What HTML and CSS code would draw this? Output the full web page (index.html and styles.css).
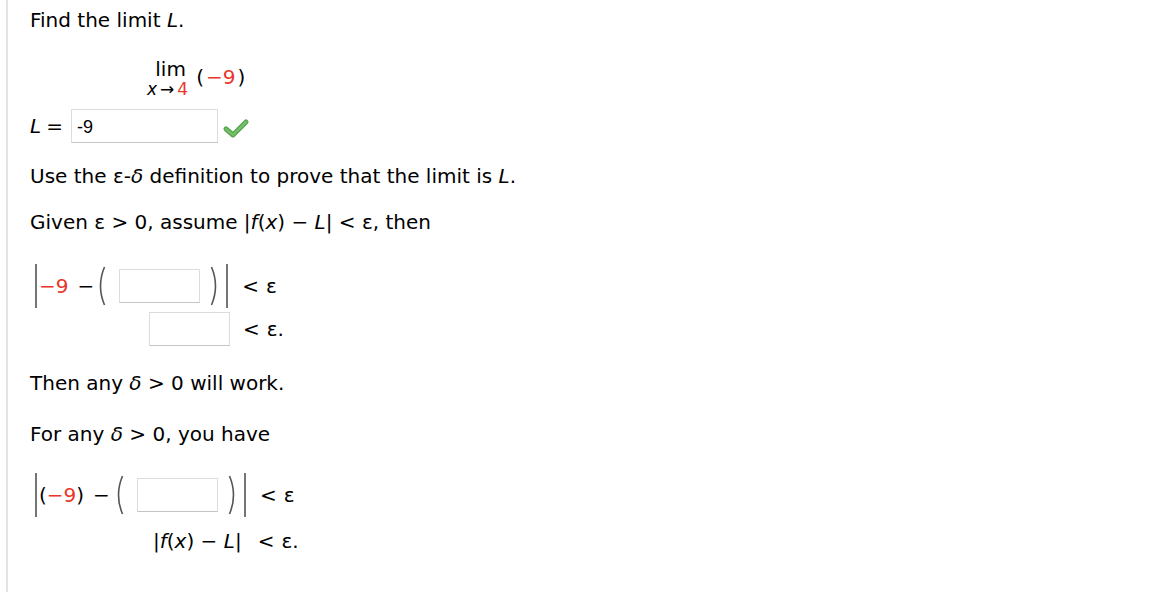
FILE: index.html
```html
<!DOCTYPE html>
<html>
<head>
<meta charset="utf-8">
<link rel="stylesheet" href="styles.css">
</head>
<body>
<div class="frame">
  <div class="q">
    <p class="l1">Find the limit <i>L</i>.</p>
    <div class="limrow">
      <span class="lim"><span class="limw">lim</span><span class="limsub"><i>x</i><span class="arr">→</span><span class="red">4</span></span></span>
      <span class="limarg">(<span class="red">−9</span>)</span>
    </div>
    <div class="ansrow">
      <span class="leq"><i>L</i><span class="eq">=</span></span>
      <span class="inp wide"><span class="val">-9</span></span>
      <svg class="check" width="28" height="22" viewBox="0 0 28 22"><path d="M4 12 L11 18 L24 5" fill="none" stroke="#5aa752" stroke-width="5" stroke-linecap="round" stroke-linejoin="round"/><path d="M4 12 L11 18 L24 5" fill="none" stroke="#79c26c" stroke-width="2" stroke-linecap="round" stroke-linejoin="round"/></svg>
    </div>
    <p class="l2">Use the ε-<i>δ</i> definition to prove that the limit is <i>L</i>.</p>
    <p class="l3">Given ε &gt; 0, assume |<i>f</i>(<i>x</i>) − <i>L</i>| &lt; ε, then</p>
    <div class="mrow r1">
      <svg class="bar" width="4" height="44" viewBox="0 0 4 44"><line x1="2" y1="0" x2="2" y2="44" stroke="#666" stroke-width="1.8"/></svg>
      <span class="red first">−9</span>
      <span class="minus">−</span>
      <svg class="par" width="10" height="40" viewBox="0 0 10 40"><path d="M8.5 1 Q0.5 20 8.5 39" fill="none" stroke="#555" stroke-width="1.6"/></svg>
      <span class="inp small"></span>
      <svg class="par" width="10" height="40" viewBox="0 0 10 40"><path d="M1.5 1 Q9.5 20 1.5 39" fill="none" stroke="#555" stroke-width="1.6"/></svg>
      <svg class="bar close" width="4" height="44" viewBox="0 0 4 44"><line x1="2" y1="0" x2="2" y2="44" stroke="#666" stroke-width="1.8"/></svg>
      <span class="rel"><span class="lt">&lt;</span>ε</span>
    </div>
    <div class="mrow r2">
      <span class="inp small"></span>
      <span class="rel"><span class="lt">&lt;</span>ε.</span>
    </div>
    <p class="l4">Then any <i>δ</i> &gt; 0 will work.</p>
    <p class="l5">For any <i>δ</i> &gt; 0, you have</p>
    <div class="mrow r3">
      <svg class="bar" width="4" height="44" viewBox="0 0 4 44"><line x1="2" y1="0" x2="2" y2="44" stroke="#666" stroke-width="1.8"/></svg>
      <span class="first">(<span class="red">−9</span>)</span>
      <span class="minus">−</span>
      <svg class="par" width="10" height="40" viewBox="0 0 10 40"><path d="M8.5 1 Q0.5 20 8.5 39" fill="none" stroke="#555" stroke-width="1.6"/></svg>
      <span class="inp small"></span>
      <svg class="par" width="10" height="40" viewBox="0 0 10 40"><path d="M1.5 1 Q9.5 20 1.5 39" fill="none" stroke="#555" stroke-width="1.6"/></svg>
      <svg class="bar close" width="4" height="44" viewBox="0 0 4 44"><line x1="2" y1="0" x2="2" y2="44" stroke="#666" stroke-width="1.8"/></svg>
      <span class="rel"><span class="lt">&lt;</span>ε</span>
    </div>
    <div class="mrow r4">
      <span>|<i>f</i>(<i>x</i>) − <i>L</i>|</span>
      <span class="rel"><span class="lt">&lt;</span>ε.</span>
    </div>
  </div>
</div>
</body>
</html>
```
FILE: styles.css
```css
html, body {
  margin: 0;
  padding: 0;
  background: #fff;
}
body {
  font-family: "DejaVu Sans", Verdana, sans-serif;
  font-size: 20px;
  color: #000;
}
.frame {
  margin-left: 6px;
  border-left: 2px solid #e3e3e3;
  height: 592px;
  box-sizing: border-box;
}
.q {
  padding: 8px 0 0 22px;
}
p {
  margin: 0;
  line-height: 24px;
}
.red { color: #e8362a; }
.limrow {
  display: flex;
  align-items: flex-start;
  margin: 28px 0 0 117px;
}
.lim {
  display: inline-flex;
  flex-direction: column;
  align-items: center;
  line-height: 18px;
}
.limw { margin-left: 6px; }
.limsub { font-size: 17px; line-height: 18px; margin-top: 2px; white-space: nowrap; }
.arr { font-size: 17px; margin: 0 3px; }
.limarg { margin: 6px 0 0 8px; line-height: 22px; }
.limarg .red { margin: 0 2px; }
.ansrow {
  display: flex;
  align-items: center;
  margin-top: 11px;
  height: 34px;
}
.eq { margin-left: 5px; }
.inp {
  display: inline-block;
  box-sizing: border-box;
  border: 1px solid #dcdcdc;
  border-bottom-color: #c4c4c4;
  background: #fff;
  height: 34px;
}
.inp.wide { width: 147px; margin-left: 8px; padding: 5px 5px; line-height: 22px; }
.val { font-family: "Liberation Sans", Arial, sans-serif; font-size: 18px; }
.check { margin-left: 4px; margin-top: 4px; }
.l2 { margin-top: 21px; }
.l3 { margin-top: 22px; }
.mrow {
  display: flex;
  align-items: center;
}
.r1 { margin-top: 30px; padding-left: 4px; }
.bar { display: block; }
.bar.close { margin-left: 4px; }
.first { margin-left: 1px; }
.minus { margin: 0 1px 0 9px; }
.par { display: block; margin: 0 1px; }
.inp.small { width: 81px; margin: 0 9px 0 12px; }
.lt { margin-right: 7px; }
.rel { margin-left: 13px; }
.r2 { margin-top: 4px; padding-left: 119px; }
.r2 .inp.small { margin: 0; }
.l4 { margin-top: 25px; }
.l5 { margin-top: 27px; }
.r3 { margin-top: 27px; padding-left: 4px; }
.r3 .minus { margin-right: 3px; }
.r4 { margin-top: 12px; padding-left: 123px; }
.r4 .rel { margin-left: 16px; }
```
